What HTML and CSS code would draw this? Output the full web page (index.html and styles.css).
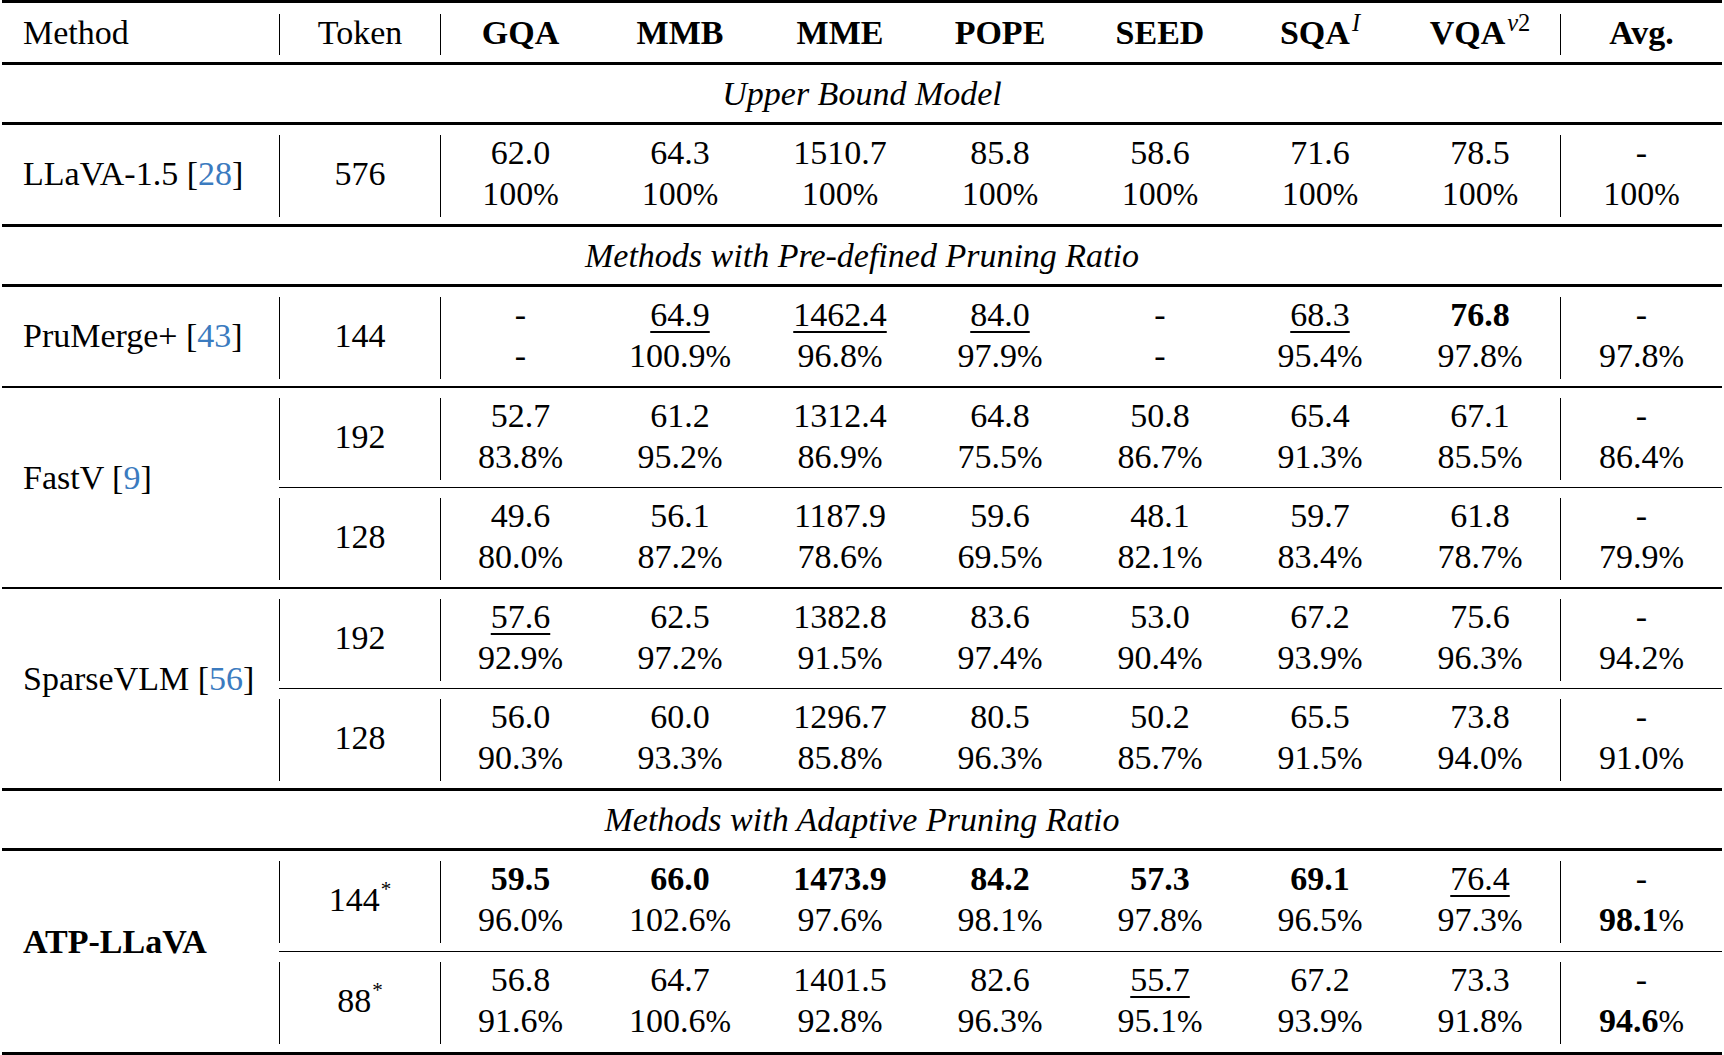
FILE: index.html
```html
<!DOCTYPE html>
<html lang="en">
<head>
<meta charset="utf-8">
<title>ATP-LLaVA comparison table</title>
<link rel="stylesheet" href="styles.css">
</head>
<body>
<div class="tbl">
  <div class="row head rule-thick">
    <div class="cell m"><span>Method</span></div>
    <div class="cell t"><span>Token</span></div>
    <div class="cell d vl b"><span>GQA</span></div>
    <div class="cell d b"><span>MMB</span></div>
    <div class="cell d b"><span>MME</span></div>
    <div class="cell d b"><span>POPE</span></div>
    <div class="cell d b"><span>SEED</span></div>
    <div class="cell d b"><span>SQA<span class="sup it">I</span></span></div>
    <div class="cell d b"><span>VQA<span class="sup"><span class="it">v</span>2</span></span></div>
    <div class="cell a b"><span>Avg.</span></div>
  </div>

  <div class="section rule-thick">Upper Bound Model</div>

  <div class="row rule-thick">
    <div class="cell m"><span>LLaVA-1.5 [<span class="ref">28</span>]</span></div>
    <div class="cell t"><span>576</span></div>
    <div class="cell d vl"><span>62.0</span><span>100<span class="pc">%</span></span></div>
    <div class="cell d"><span>64.3</span><span>100<span class="pc">%</span></span></div>
    <div class="cell d"><span>1510.7</span><span>100<span class="pc">%</span></span></div>
    <div class="cell d"><span>85.8</span><span>100<span class="pc">%</span></span></div>
    <div class="cell d"><span>58.6</span><span>100<span class="pc">%</span></span></div>
    <div class="cell d"><span>71.6</span><span>100<span class="pc">%</span></span></div>
    <div class="cell d"><span>78.5</span><span>100<span class="pc">%</span></span></div>
    <div class="cell a"><span>-</span><span>100<span class="pc">%</span></span></div>
  </div>

  <div class="section rule-thick">Methods with Pre-defined Pruning Ratio</div>

  <div class="row rule-mid">
    <div class="cell m"><span>PruMerge+ [<span class="ref">43</span>]</span></div>
    <div class="cell t"><span>144</span></div>
    <div class="cell d vl"><span>-</span><span>-</span></div>
    <div class="cell d"><span class="ul">64.9</span><span>100.9<span class="pc">%</span></span></div>
    <div class="cell d"><span class="ul">1462.4</span><span>96.8<span class="pc">%</span></span></div>
    <div class="cell d"><span class="ul">84.0</span><span>97.9<span class="pc">%</span></span></div>
    <div class="cell d"><span>-</span><span>-</span></div>
    <div class="cell d"><span class="ul">68.3</span><span>95.4<span class="pc">%</span></span></div>
    <div class="cell d"><span class="b">76.8</span><span>97.8<span class="pc">%</span></span></div>
    <div class="cell a"><span>-</span><span>97.8<span class="pc">%</span></span></div>
  </div>

  <div class="group rule-mid">
    <div class="gm"><span>FastV [<span class="ref">9</span>]</span></div>
    <div class="gs">
      <div class="row rule-cmid">
        <div class="cell t"><span>192</span></div>
        <div class="cell d vl"><span>52.7</span><span>83.8<span class="pc">%</span></span></div>
        <div class="cell d"><span>61.2</span><span>95.2<span class="pc">%</span></span></div>
        <div class="cell d"><span>1312.4</span><span>86.9<span class="pc">%</span></span></div>
        <div class="cell d"><span>64.8</span><span>75.5<span class="pc">%</span></span></div>
        <div class="cell d"><span>50.8</span><span>86.7<span class="pc">%</span></span></div>
        <div class="cell d"><span>65.4</span><span>91.3<span class="pc">%</span></span></div>
        <div class="cell d"><span>67.1</span><span>85.5<span class="pc">%</span></span></div>
        <div class="cell a"><span>-</span><span>86.4<span class="pc">%</span></span></div>
      </div>
      <div class="row">
        <div class="cell t"><span>128</span></div>
        <div class="cell d vl"><span>49.6</span><span>80.0<span class="pc">%</span></span></div>
        <div class="cell d"><span>56.1</span><span>87.2<span class="pc">%</span></span></div>
        <div class="cell d"><span>1187.9</span><span>78.6<span class="pc">%</span></span></div>
        <div class="cell d"><span>59.6</span><span>69.5<span class="pc">%</span></span></div>
        <div class="cell d"><span>48.1</span><span>82.1<span class="pc">%</span></span></div>
        <div class="cell d"><span>59.7</span><span>83.4<span class="pc">%</span></span></div>
        <div class="cell d"><span>61.8</span><span>78.7<span class="pc">%</span></span></div>
        <div class="cell a"><span>-</span><span>79.9<span class="pc">%</span></span></div>
      </div>
    </div>
  </div>

  <div class="group rule-thick">
    <div class="gm"><span>SparseVLM [<span class="ref">56</span>]</span></div>
    <div class="gs">
      <div class="row rule-cmid">
        <div class="cell t"><span>192</span></div>
        <div class="cell d vl"><span class="ul">57.6</span><span>92.9<span class="pc">%</span></span></div>
        <div class="cell d"><span>62.5</span><span>97.2<span class="pc">%</span></span></div>
        <div class="cell d"><span>1382.8</span><span>91.5<span class="pc">%</span></span></div>
        <div class="cell d"><span>83.6</span><span>97.4<span class="pc">%</span></span></div>
        <div class="cell d"><span>53.0</span><span>90.4<span class="pc">%</span></span></div>
        <div class="cell d"><span>67.2</span><span>93.9<span class="pc">%</span></span></div>
        <div class="cell d"><span>75.6</span><span>96.3<span class="pc">%</span></span></div>
        <div class="cell a"><span>-</span><span>94.2<span class="pc">%</span></span></div>
      </div>
      <div class="row">
        <div class="cell t"><span>128</span></div>
        <div class="cell d vl"><span>56.0</span><span>90.3<span class="pc">%</span></span></div>
        <div class="cell d"><span>60.0</span><span>93.3<span class="pc">%</span></span></div>
        <div class="cell d"><span>1296.7</span><span>85.8<span class="pc">%</span></span></div>
        <div class="cell d"><span>80.5</span><span>96.3<span class="pc">%</span></span></div>
        <div class="cell d"><span>50.2</span><span>85.7<span class="pc">%</span></span></div>
        <div class="cell d"><span>65.5</span><span>91.5<span class="pc">%</span></span></div>
        <div class="cell d"><span>73.8</span><span>94.0<span class="pc">%</span></span></div>
        <div class="cell a"><span>-</span><span>91.0<span class="pc">%</span></span></div>
      </div>
    </div>
  </div>

  <div class="section rule-thick">Methods with Adaptive Pruning Ratio</div>

  <div class="group rule-thick">
    <div class="gm b"><span>ATP-LLaVA</span></div>
    <div class="gs">
      <div class="row tall rule-cmid">
        <div class="cell t"><span>144<span class="ast">*</span></span></div>
        <div class="cell d vl"><span class="b">59.5</span><span>96.0<span class="pc">%</span></span></div>
        <div class="cell d"><span class="b">66.0</span><span>102.6<span class="pc">%</span></span></div>
        <div class="cell d"><span class="b">1473.9</span><span>97.6<span class="pc">%</span></span></div>
        <div class="cell d"><span class="b">84.2</span><span>98.1<span class="pc">%</span></span></div>
        <div class="cell d"><span class="b">57.3</span><span>97.8<span class="pc">%</span></span></div>
        <div class="cell d"><span class="b">69.1</span><span>96.5<span class="pc">%</span></span></div>
        <div class="cell d"><span class="ul">76.4</span><span>97.3<span class="pc">%</span></span></div>
        <div class="cell a"><span>-</span><span class="b">98.1<span class="pc">%</span></span></div>
      </div>
      <div class="row tall">
        <div class="cell t"><span>88<span class="ast">*</span></span></div>
        <div class="cell d vl"><span>56.8</span><span>91.6<span class="pc">%</span></span></div>
        <div class="cell d"><span>64.7</span><span>100.6<span class="pc">%</span></span></div>
        <div class="cell d"><span>1401.5</span><span>92.8<span class="pc">%</span></span></div>
        <div class="cell d"><span>82.6</span><span>96.3<span class="pc">%</span></span></div>
        <div class="cell d"><span class="ul">55.7</span><span>95.1<span class="pc">%</span></span></div>
        <div class="cell d"><span>67.2</span><span>93.9<span class="pc">%</span></span></div>
        <div class="cell d"><span>73.3</span><span>91.8<span class="pc">%</span></span></div>
        <div class="cell a"><span>-</span><span class="b">94.6<span class="pc">%</span></span></div>
      </div>
    </div>
  </div>
</div>
</body>
</html>
```

FILE: styles.css
```css
* {
  box-sizing: border-box;
}

body {
  margin: 0;
  background: #ffffff;
  color: #000000;
  font-family: "Liberation Serif", "Times New Roman", serif;
  font-size: 34px;
}

.tbl {
  margin-left: 2px;
  width: 1720px;
  border-top: 3px solid #000;
}

.rule-thick {
  border-bottom: 3px solid #000;
}

.rule-mid {
  border-bottom: 2px solid #000;
}

.rule-cmid {
  border-bottom: 1px solid #000;
}

.row {
  display: flex;
  padding: 10px 0 7px;
}

.row.tall {
  padding-bottom: 8px;
}

.row.head {
  padding: 11px 0 7px;
}

.cell {
  display: flex;
  flex-direction: column;
  justify-content: center;
  align-items: center;
  line-height: 41px;
  white-space: nowrap;
}

.cell > span {
  display: block;
  height: 41px;
  line-height: 41px;
  transform: translateY(-3px);
}

.head .cell > span {
  transform: translateY(-2px);
}

.m {
  width: 277px;
  padding-left: 21px;
  align-items: flex-start;
}

.t {
  width: 161px;
  border-left: 1px solid #000;
}

.d {
  width: 160px;
}

.vl {
  border-left: 1px solid #000;
}

.a {
  width: 162px;
  border-left: 1px solid #000;
}

.b {
  font-weight: bold;
}

.section {
  text-align: center;
  font-style: italic;
  height: 60px;
  line-height: 41px;
  padding: 8px 0 8px;
}

.group {
  display: flex;
}

.gm {
  width: 277px;
  padding-left: 21px;
  padding-bottom: 20px;
  display: flex;
  align-items: center;
  line-height: 41px;
  white-space: nowrap;
}

.gs {
  flex: 1;
  display: flex;
  flex-direction: column;
}

.ref {
  color: #3b7bbf;
}

.pc {
  font-size: 0.9em;
  font-weight: normal;
  line-height: 1;
}

.ul {
  text-decoration: underline;
  text-decoration-thickness: 1.5px;
  text-underline-offset: 5px;
}

.sup {
  font-size: 0.72em;
  font-weight: normal;
  vertical-align: 0.55em;
  line-height: 0;
  margin-left: 2px;
}

.it {
  font-style: italic;
}

.ast {
  font-size: 0.62em;
  vertical-align: 0.7em;
  line-height: 0;
  margin-left: 1px;
}
```
